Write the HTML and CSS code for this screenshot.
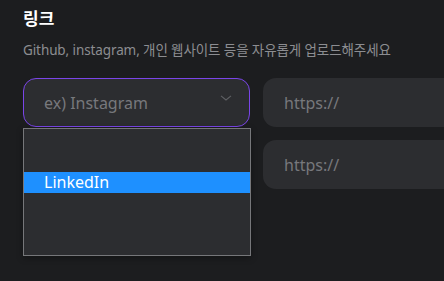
FILE: index.html
```html
<!DOCTYPE html>
<html lang="ko">
<head>
<meta charset="utf-8">
<link rel="stylesheet" href="styles.css">
</head>
<body>
<section class="links">
  <h2 class="title">링크</h2>
  <p class="desc">Github, instagram, 개인 웹사이트 등을 자유롭게 업로드해주세요</p>
  <div class="grid">
    <div class="select-wrap">
      <div class="select">
        <span class="placeholder">ex) Instagram</span>
        <svg class="chev" width="12" height="6" viewBox="0 0 12 6"><path d="M1 0.8l5 4.2L11 0.8" fill="none" stroke="#5f6064" stroke-width="1.1"/></svg>
      </div>
      <ul class="menu">
        <li class="opt"></li>
        <li class="opt"></li>
        <li class="opt active">LinkedIn</li>
      </ul>
    </div>
    <div class="inputs">
      <div class="input">https://</div>
      <div class="input">https://</div>
    </div>
  </div>
</section>
</body>
</html>
```
FILE: styles.css
```css
html, body {
  margin: 0;
  padding: 0;
  background: #1c1d1f;
  overflow: hidden;
}
body {
  width: 444px;
  height: 281px;
  font-family: "Noto Sans", "Noto Sans CJK KR", sans-serif;
}
.links {
  padding: 7px 0 0 23px;
}
.title {
  margin: 0;
  font-size: 17px;
  font-weight: 700;
  color: #ffffff;
  line-height: 22px;
  font-family: "Noto Sans CJK KR", sans-serif;
}
.desc {
  margin: 12px 0 0;
  font-size: 13.5px;
  line-height: 18px;
  color: #8c8d91;
  letter-spacing: -0.1px;
}
.grid {
  margin-top: 19px;
  display: flex;
  gap: 13px;
}
.select-wrap {
  position: relative;
  width: 227px;
  flex: none;
}
.select {
  box-sizing: border-box;
  height: 49px;
  border: 1px solid #7a45e8;
  border-radius: 13px;
  background: #2c2d30;
  display: flex;
  align-items: center;
  justify-content: space-between;
  padding: 0 17px 0 20px;
}
.placeholder {
  font-size: 16px;
  color: #77787c;
}
.chev {
  margin-top: -9px;
}
.menu {
  position: absolute;
  left: 0;
  top: 50px;
  box-sizing: border-box;
  width: 228px;
  height: 128px;
  margin: 0;
  padding: 1px 0 0;
  list-style: none;
  background: #2c2d30;
  border: 1px solid #76777a;
  box-shadow: 0 2px 6px rgba(0,0,0,0.35);
}
.opt {
  height: 21px;
  line-height: 21px;
  padding-left: 20px;
  font-size: 16px;
  color: #ffffff;
}
.opt.active {
  background: #1e90ff;
}
.inputs {
  display: flex;
  flex-direction: column;
  gap: 13px;
  flex: 1;
}
.input {
  box-sizing: border-box;
  height: 49px;
  border-radius: 13px 0 0 13px;
  background: #2c2d30;
  padding: 0 0 0 21px;
  display: flex;
  align-items: center;
  font-size: 16px;
  color: #77787c;
}
```
